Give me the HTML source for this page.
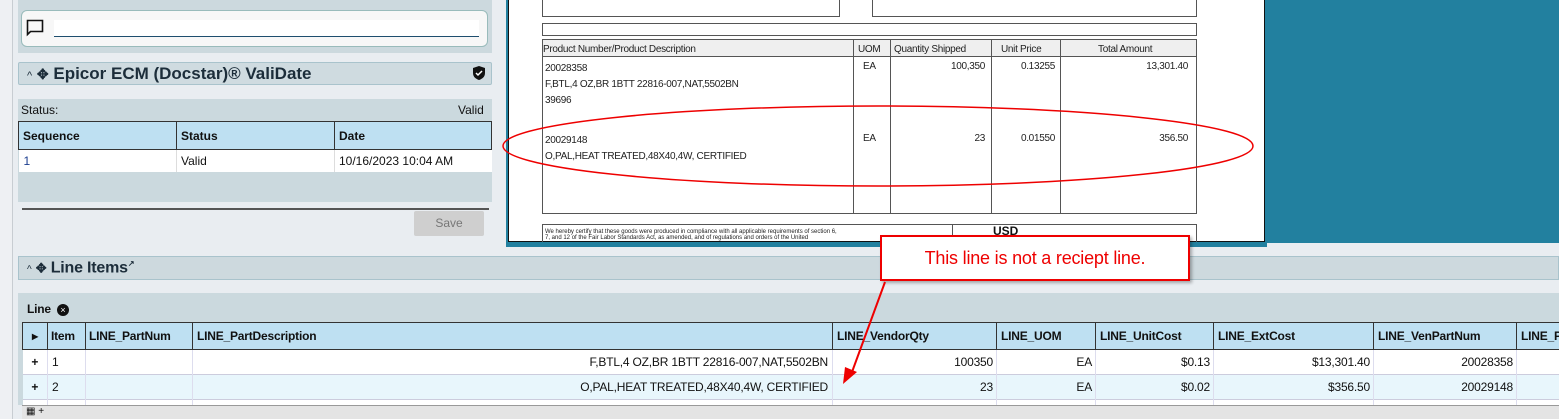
<!DOCTYPE html>
<html><head><meta charset="utf-8"><style>
*{box-sizing:border-box;margin:0;padding:0}
body{width:1559px;height:419px;overflow:hidden;background:#e9edf1;font-family:"Liberation Sans",Arial,sans-serif;font-size:12px;color:#111;position:relative}
.abs{position:absolute}
.n{font-family:"Liberation Sans",sans-serif;letter-spacing:-0.2px}
table{border-collapse:collapse}
</style></head><body>
<div class="abs" style="left:0;top:0;width:13px;height:419px;background:#eef0f3;border-right:1px solid #c8cdd2"></div>
<!-- top panel -->
<div class="abs" style="left:18px;top:0;width:474px;height:53px;background:#ccd9de"></div>
<div class="abs" style="left:21px;top:10px;width:467px;height:37px;background:#f7f7f7;border:1px solid #9bb;border-radius:6px"></div>
<svg class="abs" style="left:26px;top:19px" width="20" height="18"><path d="M1.5 1.5h15v11h-12l-3 3z" fill="none" stroke="#111" stroke-width="1.6"/></svg>
<div class="abs" style="left:54px;top:20px;width:425px;height:17px;background:#fff;border-bottom:1px solid #1e4e6e"></div>
<!-- epicor header -->
<div class="abs" style="left:18px;top:62px;width:474px;height:23px;background:#cfdbe0;border:1px solid #a9c3cc;border-radius:2px"></div>
<div class="abs" style="left:27px;top:64px;font-size:17px;font-weight:bold;color:#1c2d3a;white-space:nowrap"><span style="font-size:11px;font-weight:normal">^</span> <span style="font-size:14px">✥</span> Epicor ECM (Docstar)® ValiDate</div>
<svg class="abs" style="left:472px;top:65px" width="14" height="16"><path d="M7 1l6 2v5c0 4-3 6-6 7-3-1-6-3-6-7V3z" fill="#111"/><path d="M4 8l2 2 4-4" stroke="#fff" stroke-width="1.5" fill="none"/></svg>
<div class="abs" style="left:18px;top:99px;width:474px;height:103px;background:#cbd9de"></div>
<div class="abs" style="left:21px;top:103px">Status:</div>
<div class="abs" style="left:458px;top:103px">Valid</div>
<table class="abs" style="left:18px;top:121px;width:474px">
<tr style="height:28px;background:#bee0f2;font-weight:bold"><td style="border:1px solid #333;padding-left:4px;width:158px">Sequence</td><td style="border:1px solid #333;padding-left:4px;width:158px">Status</td><td style="border:1px solid #333;padding-left:4px">Date</td></tr>
<tr style="height:22px;background:#fff"><td style="padding-left:5px;color:#1a3d8f">1</td><td style="padding-left:4px;border-left:1px solid #ddd">Valid</td><td style="padding-left:4px;border-left:1px solid #ddd">10/16/2023 10:04 AM</td></tr>
</table>
<div class="abs" style="left:22px;top:208px;width:467px;height:2px;background:#555"></div>
<div class="abs" style="left:414px;top:211px;width:70px;height:25px;background:#cfcfcf;border-radius:2px;color:#777;text-align:center;line-height:25px">Save</div>
<!-- document -->
<div class="abs" style="left:1265px;top:0;width:294px;height:243px;background:#22809f"></div>
<div class="abs" style="left:506px;top:0;width:761px;height:247px;background:#22809f"></div>
<div class="abs" style="left:508px;top:0;width:757px;height:242px;background:#fff;border:1px solid #111;border-top:none"></div>
<div class="abs" style="left:542px;top:0;width:298px;height:17px;border:1px solid #555;border-top:none"></div>
<div class="abs" style="left:872px;top:0;width:325px;height:17px;border:1px solid #555;border-top:none"><span style="position:absolute;left:12px;top:-8px;font-size:10px;color:#333">Saint Charles MO 63301</span></div>
<div class="abs" style="left:542px;top:23px;width:655px;height:13px;border:1px solid #555"></div>
<div class="abs" style="left:542px;top:39px;width:655px;height:175px;border:1px solid #555;font-size:10px;letter-spacing:-0.3px;color:#222">
<div style="position:absolute;left:0;top:0;width:653px;height:17px;background:#efefef;border-bottom:1px solid #555"></div>
<div style="position:absolute;left:310px;top:0;height:174px;border-left:1px solid #555"></div>
<div style="position:absolute;left:347px;top:0;height:174px;border-left:1px solid #555"></div>
<div style="position:absolute;left:448px;top:0;height:174px;border-left:1px solid #555"></div>
<div style="position:absolute;left:517px;top:0;height:174px;border-left:1px solid #555"></div>
<div style="position:absolute;left:0;top:4px">Product Number/Product Description</div>
<div style="position:absolute;left:315px;top:4px">UOM</div>
<div style="position:absolute;left:351px;top:4px">Quantity Shipped</div>
<div style="position:absolute;left:458px;top:4px">Unit Price</div>
<div style="position:absolute;left:555px;top:4px">Total Amount</div>
<div style="position:absolute;left:2px;top:21px;line-height:16px">20028358<br>F,BTL,4 OZ,BR 1BTT 22816-007,NAT,5502BN<br>39696</div>
<div style="position:absolute;left:320px;top:21px">EA</div>
<div style="position:absolute;left:347px;width:95px;text-align:right;top:21px">100,350</div>
<div style="position:absolute;left:448px;width:64px;text-align:right;top:21px">0.13255</div>
<div style="position:absolute;left:517px;width:128px;text-align:right;top:21px">13,301.40</div>
<div style="position:absolute;left:2px;top:93px;line-height:16px">20029148<br>O,PAL,HEAT TREATED,48X40,4W, CERTIFIED</div>
<div style="position:absolute;left:320px;top:93px">EA</div>
<div style="position:absolute;left:347px;width:95px;text-align:right;top:93px">23</div>
<div style="position:absolute;left:448px;width:64px;text-align:right;top:93px">0.01550</div>
<div style="position:absolute;left:517px;width:128px;text-align:right;top:93px">356.50</div>
</div>
<div class="abs" style="left:542px;top:224px;width:655px;height:18px;border:1px solid #555;border-bottom:none;font-size:6px;line-height:6px;padding:4px 2px;overflow:hidden;color:#222">We hereby certify that these goods were produced in compliance with all applicable requirements of section 6,<br>7, and 12 of the Fair Labor Standards Act, as amended, and of regulations and orders of the United</div>
<div class="abs" style="left:952px;top:224px;height:18px;border-left:1px solid #555;font-size:12px;font-weight:bold;padding-left:40px">USD</div>
<svg class="abs" style="left:498px;top:100px" width="765" height="92"><ellipse cx="380" cy="46" rx="375" ry="40" fill="none" stroke="#e00" stroke-width="1.5"/></svg>
<!-- line items header -->
<div class="abs" style="left:18px;top:256px;width:1541px;height:24px;background:#cdd9de;border:1px solid #a9c3cc"></div>
<div class="abs n" style="left:27px;top:259px;font-size:16px;color:#1c2d3a;white-space:nowrap;font-weight:bold"><span style="font-size:10px;font-weight:normal">^</span> <span style="font-size:13px">✥</span> Line Items<sup style="font-size:8px">↗</sup></div>
<div class="abs" style="left:18px;top:293px;width:1541px;height:112px;background:#cbd9de"></div>
<div class="abs n" style="left:27px;top:302px;font-size:12px;font-weight:bold">Line</div>
<div class="abs" style="left:57px;top:304px;width:12px;height:12px;border-radius:6px;background:#111;color:#fff;font-size:9px;line-height:12px;text-align:center">×</div>
<table class="abs n" style="left:22px;top:322px;width:1560px;font-size:12px;table-layout:fixed">
<colgroup><col style="width:25px"><col style="width:38px"><col style="width:107px"><col style="width:640px"><col style="width:164px"><col style="width:99px"><col style="width:118px"><col style="width:160px"><col style="width:143px"><col style="width:66px"></colgroup>
<tr style="height:27px;background:#bee0f2;font-weight:bold"><td style="border:1px solid #333;text-align:center;font-size:8px">▶</td><td style="border:1px solid #333;padding-left:3px">Item</td><td style="border:1px solid #333;padding-left:3px">LINE_PartNum</td><td style="border:1px solid #333;padding-left:4px">LINE_PartDescription</td><td style="border:1px solid #333;padding-left:4px">LINE_VendorQty</td><td style="border:1px solid #333;padding-left:4px">LINE_UOM</td><td style="border:1px solid #333;padding-left:4px">LINE_UnitCost</td><td style="border:1px solid #333;padding-left:4px">LINE_ExtCost</td><td style="border:1px solid #333;padding-left:4px">LINE_VenPartNum</td><td style="border:1px solid #333;padding-left:4px">LINE_P</td></tr>
<tr style="height:25px;background:#fff;border-bottom:1px solid #ccd"><td style="text-align:center;font-weight:bold">+</td><td style="padding-left:4px;border-left:1px solid #dde">1</td><td style="border-left:1px solid #dde"></td><td style="text-align:right;padding-right:4px;border-left:1px solid #dde">F,BTL,4 OZ,BR 1BTT 22816-007,NAT,5502BN</td><td style="text-align:right;padding-right:3px;border-left:1px solid #dde">100350</td><td style="text-align:right;padding-right:3px;border-left:1px solid #dde">EA</td><td style="text-align:right;padding-right:3px;border-left:1px solid #dde">$0.13</td><td style="text-align:right;padding-right:3px;border-left:1px solid #dde">$13,301.40</td><td style="text-align:right;padding-right:3px;border-left:1px solid #dde">20028358</td><td style="border-left:1px solid #dde"></td></tr>
<tr style="height:25px;background:#e8f6fc;border-bottom:1px solid #ccd"><td style="text-align:center;font-weight:bold">+</td><td style="padding-left:4px;border-left:1px solid #dde">2</td><td style="border-left:1px solid #dde"></td><td style="text-align:right;padding-right:4px;border-left:1px solid #dde">O,PAL,HEAT TREATED,48X40,4W, CERTIFIED</td><td style="text-align:right;padding-right:3px;border-left:1px solid #dde">23</td><td style="text-align:right;padding-right:3px;border-left:1px solid #dde">EA</td><td style="text-align:right;padding-right:3px;border-left:1px solid #dde">$0.02</td><td style="text-align:right;padding-right:3px;border-left:1px solid #dde">$356.50</td><td style="text-align:right;padding-right:3px;border-left:1px solid #dde">20029148</td><td style="border-left:1px solid #dde"></td></tr>
<tr style="height:6px;background:#fff"><td></td><td style="border-left:1px solid #dde"></td><td style="border-left:1px solid #dde"></td><td style="border-left:1px solid #dde"></td><td style="border-left:1px solid #dde"></td><td style="border-left:1px solid #dde"></td><td style="border-left:1px solid #dde"></td><td style="border-left:1px solid #dde"></td><td style="border-left:1px solid #dde"></td><td style="border-left:1px solid #dde"></td></tr>
</table>
<div class="abs" style="left:22px;top:405px;width:1537px;height:14px;background:#e4e4e4;border-top:1px solid #999;font-size:10px;padding-left:4px">▦ +</div>
<!-- callout -->
<div class="abs n" style="left:880px;top:235px;width:310px;height:46px;background:#fff;border:2px solid #e00;box-shadow:2px 2px 3px rgba(0,0,0,.3);color:#e00;font-size:18px;text-align:center;line-height:42px">This line is not a reciept line.</div>
<svg class="abs" style="left:830px;top:280px" width="70" height="110"><line x1="55" y1="2" x2="22" y2="92" stroke="#e00" stroke-width="2"/><path d="M13 104l2-17 12 5z" fill="#e00"/></svg>
</body></html>
